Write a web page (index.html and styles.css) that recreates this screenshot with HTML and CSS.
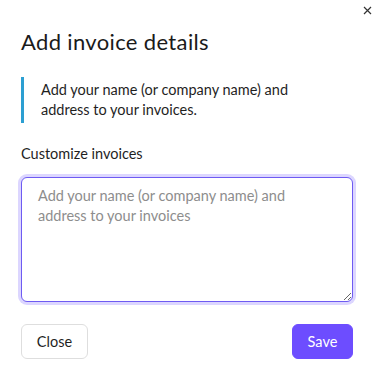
FILE: index.html
```
<!DOCTYPE html>
<html lang="en">
<head>
    <meta charset="UTF-8">
    <meta name="viewport" content="width=device-width, initial-scale=1.0">
    <title>Add invoice details</title>
    <link rel="stylesheet" href="styles.css">
</head>
<body>
    <div class="modal">
        <button class="close-x" aria-label="Close">
            <svg width="9" height="9" viewBox="0 0 9 9"><path d="M1 1L8 8M8 1L1 8" stroke="#333" stroke-width="1.2" fill="none"/></svg>
        </button>
        <h1 class="title">Add invoice details</h1>
        <div class="note">
            <p>Add your name (or company name) and<br>address to your invoices.</p>
        </div>
        <label class="field-label" for="invoice-text">Customize invoices</label>
        <textarea id="invoice-text" class="field" placeholder="Add your name (or company name) and address to your invoices" autofocus></textarea>
        <div class="actions">
            <button class="btn btn-secondary">Close</button>
            <button class="btn btn-primary">Save</button>
        </div>
    </div>
</body>
</html>
```
FILE: styles.css
```
body {
    margin: 0;
    background: #fff;
    font-family: 'Lato', sans-serif;
    color: #1f1f1f;
}
.modal {
    position: relative;
    padding: 27px 28px 0 21px;
}
.close-x {
    position: absolute;
    top: 3px;
    right: 7px;
    width: 14px;
    height: 14px;
    padding: 0;
    border: none;
    background: none;
    display: flex;
    align-items: center;
    justify-content: center;
}
.title {
    margin: 0;
    font-size: 22px;
    font-weight: 400;
    line-height: 30px;
    color: #1a1a1a;
    letter-spacing: 0.35px;
}
.note {
    margin-top: 20px;
    border-left: 3px solid #2c9fd2;
    padding: 3px 0 3px 17px;
}
.note p {
    margin: 0;
    font-size: 14.5px;
    line-height: 20px;
    color: #1f1f1f;
}
.field-label {
    display: block;
    margin-top: 21px;
    font-size: 14.5px;
    line-height: 20px;
    color: #1f1f1f;
}
.field {
    display: block;
    box-sizing: border-box;
    width: 100%;
    height: 125px;
    margin-top: 13px;
    padding: 8px 16px;
    border: 1px solid #6e5bf2;
    border-radius: 6px;
    box-shadow: 0 0 0 3px #dcd6ff;
    outline: none;
    font-family: 'Lato', sans-serif;
    font-size: 14.5px;
    line-height: 20px;
    color: #1f1f1f;
    resize: vertical;
}
.field::placeholder {
    color: #8d8d8d;
}
.actions {
    display: flex;
    justify-content: space-between;
    margin-top: 22px;
}
.btn {
    height: 35px;
    padding: 0;
    border-radius: 6px;
    font-family: 'Lato', sans-serif;
    font-size: 14.5px;
    cursor: pointer;
}
.btn-secondary {
    width: 67px;
    background: #fff;
    border: 1px solid #dedede;
    color: #1f1f1f;
}
.btn-primary {
    width: 61px;
    background: #6d4dff;
    border: 1px solid #6d4dff;
    color: #fff;
}
```
